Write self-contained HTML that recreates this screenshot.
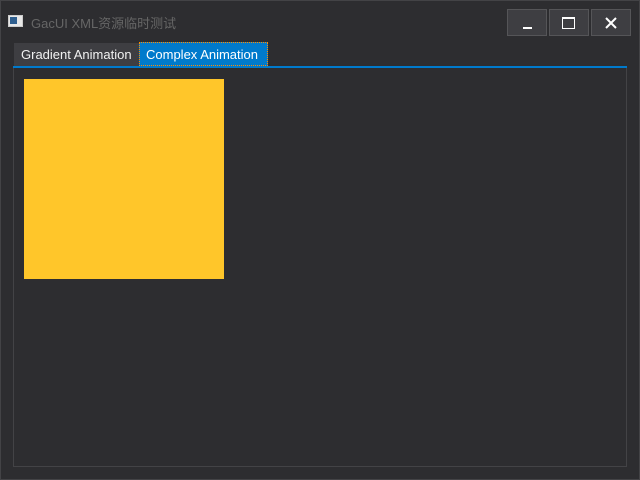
<!DOCTYPE html>
<html><head><meta charset="utf-8"><style>
*{margin:0;padding:0;box-sizing:border-box}
body{width:640px;height:480px;background:#2d2d30;position:relative;overflow:hidden;font-family:"Segoe UI","Liberation Sans","Noto Sans CJK SC",sans-serif}
.a{position:absolute}
.btn{position:absolute;top:9px;width:40px;height:27px;background:#3e3e42;border:1px solid #555558}
</style></head><body>
<div class="a" style="left:0;top:0;width:640px;height:480px;border:1px solid #434346"></div>
<div class="a" style="left:8px;top:15px;width:15px;height:12px;background:#e8e8e8;border:1px solid #ccc"></div>
<div class="a" style="left:10px;top:17px;width:7px;height:7px;background:#2f5f8f"></div>
<div class="a" style="left:31px;top:15px;font-size:13px;color:#666;line-height:18px">GacUI XML资源临时测试</div>
<div class="btn" style="left:507px"><div class="a" style="left:15px;top:17px;width:9px;height:2px;background:#fff"></div></div>
<div class="btn" style="left:549px"><div class="a" style="left:12px;top:7px;width:13px;height:12px;border:1px solid #fff;border-top-width:2px"></div></div>
<div class="btn" style="left:591px"><svg class="a" style="left:13px;top:7px" width="12" height="12"><path d="M1 1L11 11M11 1L1 11" stroke="#fff" stroke-width="2"/></svg></div>
<div class="a" style="left:14px;top:43px;width:125px;height:23px;background:#3e3e42;color:#f1f1f1;font-size:13px;line-height:24px;padding-left:7px">Gradient Animation</div>
<div class="a" style="left:139px;top:42px;width:129px;height:24px;background:#007acc;color:#fff;font-size:13px;line-height:24px;padding-left:6px;border:1px dotted #ff8c00">Complex Animation</div>
<div class="a" style="left:13px;top:66px;width:614px;height:2px;background:#007acc"></div>
<div class="a" style="left:13px;top:68px;width:614px;height:399px;border:1px solid #434346;border-top:none"></div>
<div class="a" style="left:24px;top:79px;width:200px;height:200px;background:#ffc62a"></div>
</body></html>
